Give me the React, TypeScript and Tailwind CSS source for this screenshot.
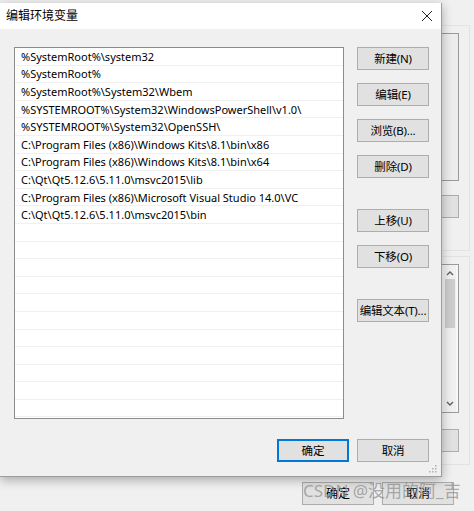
const paths = [
  "%SystemRoot%\\system32",
  "%SystemRoot%",
  "%SystemRoot%\\System32\\Wbem",
  "%SYSTEMROOT%\\System32\\WindowsPowerShell\\v1.0\\",
  "%SYSTEMROOT%\\System32\\OpenSSH\\",
  "C:\\Program Files (x86)\\Windows Kits\\8.1\\bin\\x86",
  "C:\\Program Files (x86)\\Windows Kits\\8.1\\bin\\x64",
  "C:\\Qt\\Qt5.12.6\\5.11.0\\msvc2015\\lib",
  "C:\\Program Files (x86)\\Microsoft Visual Studio 14.0\\VC",
  "C:\\Qt\\Qt5.12.6\\5.11.0\\msvc2015\\bin",
]

const rows = [...paths, ...Array(12).fill("")]

function WinButton({ label, className = "" }: { label: string; className?: string }) {
  return (
    <div
      className={
        "flex h-[23px] w-[72px] items-center justify-center whitespace-nowrap border border-[#adadad] bg-[#e1e1e1] text-[11.5px] tracking-[-0.2px] text-black " +
        className
      }
    >
      {label}
    </div>
  )
}

function BackgroundWindow() {
  return (
    <div className="flex h-full w-full flex-col items-end pr-[4px] pt-[25px]">
      <div className="flex w-[300px] flex-col items-end border border-[#e3e3e3] pb-[32px] pr-[10px] pt-[7px]">
        <div className="h-[148px] w-full border border-[#9a9a9a] bg-gradient-to-r from-[#f7f7f7] to-[#ececec]" />
        <div className="mt-[14px] h-[23px] w-[80px] border border-[#adadad] bg-[#e1e1e1]" />
      </div>
      <div className="mt-[5px] flex w-[300px] flex-col items-end border border-[#e3e3e3] pb-[12px] pr-[10px] pt-[7px]">
        <div className="flex h-[149px] w-full justify-end border border-[#9a9a9a] bg-[#f7f7f7] pr-[2px]">
          <div className="flex w-[12px] flex-col items-center bg-[#f0f0f0] py-[2px]">
            <svg width="8" height="6" viewBox="0 0 8 6" className="mt-[3px]">
              <path d="M1 5 L4 2 L7 5" fill="none" stroke="#606060" strokeWidth="1.4" />
            </svg>
            <div className="mt-[3px] h-[49px] w-[10px] bg-[#cdcdcd]" />
            <div className="flex-1" />
            <svg width="8" height="6" viewBox="0 0 8 6" className="mb-[3px]">
              <path d="M1 1 L4 4 L7 1" fill="none" stroke="#606060" strokeWidth="1.4" />
            </svg>
          </div>
        </div>
        <div className="mt-[16px] h-[23px] w-[80px] border border-[#adadad] bg-[#e1e1e1]" />
      </div>
      <div className="mt-[17px] flex gap-[8px] pr-[16px]">
        <div className="flex h-[23px] w-[72px] items-center justify-center border border-[#adadad] bg-[#e1e1e1] text-[12px]">
          确定
        </div>
        <div className="flex h-[23px] w-[72px] items-center justify-center border border-[#adadad] bg-[#e1e1e1] text-[12px]">
          取消
        </div>
      </div>
    </div>
  )
}

export default function App() {
  return (
    <div
      className="relative h-[511px] w-[474px] overflow-hidden bg-[#f0f0f0] text-black"
      style={{ fontFamily: '"Noto Sans", "Noto Sans CJK SC", sans-serif' }}
    >
      <BackgroundWindow />

      {/* dialog */}
      <div className="absolute left-0 top-[3px] flex h-[474px] w-[442px] flex-col border-b border-r border-[#9c9c9c] bg-[#f0f0f0] shadow-[0_3px_10px_rgba(0,0,0,0.3)]">
        <div className="flex h-[26px] items-center justify-between bg-white pl-[6px] pr-[8px]">
          <span className="text-[12px]">编辑环境变量</span>
          <svg width="12" height="12" viewBox="0 0 12 12">
            <path d="M1 1 L11 11 M11 1 L1 11" stroke="#222" strokeWidth="1" />
          </svg>
        </div>

        <div className="flex flex-1 flex-col pl-[14px] pr-[12px] pt-[18px]">
          <div className="flex gap-[13px]">
            <div className="h-[372px] w-[330px] overflow-hidden border border-[#8c8c8c] bg-white">
              {rows.map((p, i) => (
                <div
                  key={i}
                  className="flex h-[17.6px] items-center whitespace-nowrap border-b border-[#f0f0f0] pl-[6px] text-[11px] leading-none"
                >
                  {p}
                </div>
              ))}
            </div>
            <div className="flex flex-col">
              <WinButton label="新建(N)" />
              <WinButton label="编辑(E)" className="mt-[13px]" />
              <WinButton label="浏览(B)..." className="mt-[13px]" />
              <WinButton label="删除(D)" className="mt-[13px]" />
              <WinButton label="上移(U)" className="mt-[31px]" />
              <WinButton label="下移(O)" className="mt-[13px]" />
              <WinButton label="编辑文本(T)..." className="mt-[31px]" />
            </div>
          </div>

          <div className="mt-[20px] flex justify-end gap-[8px]">
            <div className="flex h-[23px] w-[72px] items-center justify-center border-2 border-[#0078d7] bg-[#e1e1e1] text-[11.5px]">
              确定
            </div>
            <WinButton label="取消" />
          </div>
          <div className="flex flex-1 items-end justify-end pb-[3px]">
            <svg width="8" height="8" viewBox="0 0 8 8" className="-mr-[8px]">
              <rect x="6" y="0" width="1.5" height="1.5" fill="#b0b0b0" />
              <rect x="3" y="3" width="1.5" height="1.5" fill="#b0b0b0" />
              <rect x="6" y="3" width="1.5" height="1.5" fill="#b0b0b0" />
              <rect x="0" y="6" width="1.5" height="1.5" fill="#b0b0b0" />
              <rect x="3" y="6" width="1.5" height="1.5" fill="#b0b0b0" />
              <rect x="6" y="6" width="1.5" height="1.5" fill="#b0b0b0" />
            </svg>
          </div>
        </div>
      </div>

      {/* watermark */}
      <div className="absolute left-[303px] top-[479px] whitespace-nowrap text-[17px] leading-[24px] text-[#8a8a8a]/70">
        CSDN @没用的阿_吉
      </div>
    </div>
  )
}
